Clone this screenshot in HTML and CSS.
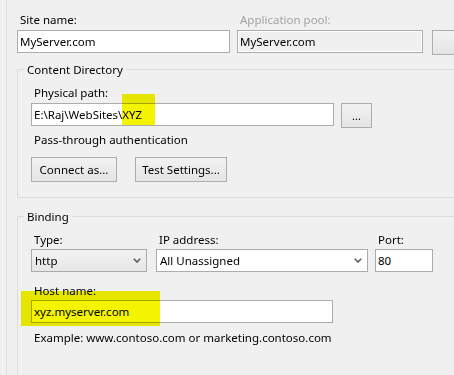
FILE: index.html
```html
<!DOCTYPE html>
<html lang="en">
<head>
    <meta charset="UTF-8">
    <title>Add Website</title>
    <link rel="stylesheet" href="styles.css">
</head>
<body>
    <div class="dialog">
        <div class="site-row">
            <div class="field site">
                <label>Site name:</label>
                <div class="text">MyServer.com</div>
            </div>
            <div class="field pool">
                <label class="disabled">Application pool:</label>
                <div class="text readonly">MyServer.com</div>
            </div>
            <div class="field">
                <label>&nbsp;</label>
                <button class="btn select" aria-label="Select"></button>
            </div>
        </div>

        <fieldset class="group content-dir">
            <legend>Content Directory</legend>
            <div class="field">
                <label>Physical path:</label>
                <div class="path-row">
                    <div class="text path">E:\Raj\WebSites\XYZ<span class="marker path-mark"></span></div>
                    <button class="btn browse">...</button>
                </div>
            </div>
            <p class="note">Pass-through authentication</p>
            <div class="btn-row">
                <button class="btn connect">Connect as...</button>
                <button class="btn test">Test Settings...</button>
            </div>
        </fieldset>

        <fieldset class="group binding">
            <legend>Binding</legend>
            <div class="binding-row">
                <div class="field type">
                    <label>Type:</label>
                    <div class="combo dropdown">
                        <span>http</span>
                        <svg width="8" height="5" viewBox="0 0 8 5"><path d="M0.8 0.8 L4 4 L7.2 0.8" fill="none" stroke="#5c5c5c" stroke-width="1.6"/></svg>
                    </div>
                </div>
                <div class="field ip">
                    <label>IP address:</label>
                    <div class="combo">
                        <span>All Unassigned</span>
                        <svg width="8" height="5" viewBox="0 0 8 5"><path d="M0.8 0.8 L4 4 L7.2 0.8" fill="none" stroke="#5c5c5c" stroke-width="1.6"/></svg>
                    </div>
                </div>
                <div class="field port">
                    <label>Port:</label>
                    <div class="text">80</div>
                </div>
            </div>
            <div class="field host">
                <label>Host name:</label>
                <div class="text host-box">xyz.myserver.com<span class="marker host-mark"></span></div>
            </div>
            <p class="note example">Example: www.contoso.com or marketing.contoso.com</p>
        </fieldset>
    </div>
</body>
</html>
```

FILE: styles.css
```css
* {
    box-sizing: border-box;
    margin: 0;
    padding: 0;
}
body {
    width: 454px;
    height: 375px;
    overflow: hidden;
    background: #f0f0f0;
    font-family: "Segoe UI", "Noto Sans", sans-serif;
    font-size: 11.5px;
    color: #000;
}
.dialog {
    margin-left: 6px;
    height: 375px;
    border-left: 1px solid #dcdcdc;
    padding: 12px 0 0 10px;
}
.field {
    flex-shrink: 0;
}
.field label {
    display: block;
    line-height: 15px;
    padding-left: 3px;
    margin-bottom: 3px;
}
.field label.disabled {
    color: #a3a3a3;
}
.text {
    position: relative;
    height: 23px;
    line-height: 21px;
    padding: 0 2px;
    background: #fff;
    border: 1px solid #acacac;
    white-space: nowrap;
}
.readonly {
    background: #f0f0f0;
    box-shadow: inset 0 0 0 1px #fff;
}
.btn {
    flex-shrink: 0;
    height: 25px;
    font: inherit;
    color: #000;
    border: 1px solid #adadad;
    background: linear-gradient(#f2f2f2, #e4e4e4);
}
.site-row {
    display: flex;
    gap: 7px;
    width: 520px;
}
.site {
    width: 213px;
}
.pool {
    width: 186px;
    margin-right: 2px;
}
.select {
    display: block;
    width: 90px;
    height: 25px;
}
.group {
    border: 1px solid #dcdcdc;
    border-right: none;
    margin-right: -30px;
    padding: 8px 0 15px 13px;
}
.group legend {
    margin-left: -7px;
    padding: 0 3px;
    line-height: 15px;
}
.content-dir {
    margin-top: 7px;
}
.path-row {
    display: flex;
    gap: 7px;
}
.path {
    width: 303px;
}
.browse {
    width: 31px;
    font-size: 11px;
}
.note {
    line-height: 15px;
    padding-left: 3px;
    margin-top: 4px;
}
.btn-row {
    display: flex;
    gap: 18px;
    margin-top: 10px;
}
.connect {
    width: 86px;
}
.test {
    width: 92px;
}
.binding {
    margin-top: 11px;
    padding-bottom: 40px;
}
.binding-row {
    display: flex;
}
.binding .field label {
    margin-bottom: 2px;
}
.type {
    width: 116px;
    margin-right: 9px;
}
.ip {
    width: 212px;
    margin-right: 7px;
}
.port {
    width: 58px;
}
.combo {
    display: flex;
    align-items: center;
    height: 23px;
    padding: 0 5px 0 3px;
    background: #fff;
    border: 1px solid #acacac;
}
.combo svg {
    margin-left: auto;
}
.dropdown {
    background: linear-gradient(#f2f2f2, #e6e6e6);
}
.host {
    margin-top: 11px;
}
.host-box {
    width: 302px;
}
.example {
    margin-top: 7px;
}
.marker {
    position: absolute;
    background: #f4f400;
    mix-blend-mode: multiply;
}
.path-mark {
    left: 90px;
    top: -10px;
    width: 33px;
    height: 31px;
}
.host-mark {
    left: -11px;
    top: -10px;
    width: 139px;
    height: 35px;
}
```
